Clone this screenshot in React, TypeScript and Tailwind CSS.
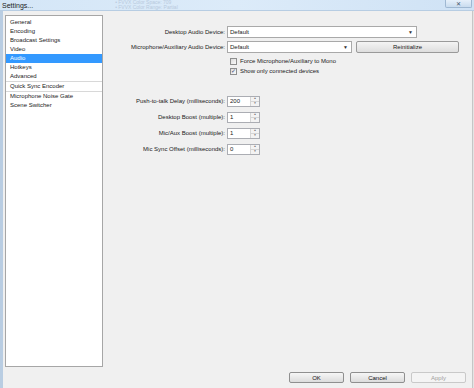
import React from 'react';

const font = { fontFamily: '"Liberation Sans", Arial, sans-serif' };

const items = [
  'General',
  'Encoding',
  'Broadcast Settings',
  'Video',
  'Audio',
  'Hotkeys',
  'Advanced',
  '-',
  'Quick Sync Encoder',
  '-',
  'Microphone Noise Gate',
  'Scene Switcher',
];

function Combo({ width, value }: { width: string; value: string }) {
  return (
    <div
      className={`${width} h-[12px] flex items-center justify-between border border-[#a9a9a9] bg-white pl-[2px] pr-[3px]`}
    >
      <span>{value}</span>
      <span className="text-[5px] text-[#333]">▼</span>
    </div>
  );
}

function Check({ checked, label }: { checked?: boolean; label: string }) {
  return (
    <div className="flex items-center gap-[3px] h-[10px]">
      <div className="w-[7px] h-[7px] border border-[#8e8f8f] bg-gradient-to-br from-[#dcdcdc] to-[#fafafa] flex items-center justify-center text-[6px] leading-none text-[#3a4a7a]">
        {checked ? '✓' : ''}
      </div>
      <span>{label}</span>
    </div>
  );
}

function Spin({ label, value }: { label: string; value: string }) {
  return (
    <div className="flex items-center h-[12px]">
      <div className="w-[124px] text-right pr-[2px]">{label}</div>
      <div className="w-[33px] h-[11px] flex border border-[#abadb3] bg-white">
        <div className="flex-1 pl-[2px] leading-[9px]">{value}</div>
        <div className="w-[9px] flex flex-col border-l border-[#d5d5d5] bg-[#f3f3f3]">
          <div className="flex-1 flex items-center justify-center text-[3px] text-[#777] border-b border-[#d5d5d5]">▲</div>
          <div className="flex-1 flex items-center justify-center text-[3px] text-[#777]">▼</div>
        </div>
      </div>
    </div>
  );
}

function Btn({ label, disabled }: { label: string; disabled?: boolean }) {
  return (
    <div
      className={`w-[55px] h-[11px] flex items-center justify-center rounded-[2px] border ${
        disabled
          ? 'border-[#c9c9c9] bg-[#f4f4f4] text-[#a0a0a0]'
          : 'border-[#8f8f8f] bg-gradient-to-b from-[#f6f6f6] to-[#dcdcdc] text-[#111]'
      }`}
    >
      {label}
    </div>
  );
}

export default function App() {
  return (
    <div
      className="w-[474px] h-[388px] overflow-hidden bg-[#f0f0f0] text-[6px] leading-none text-[#1a1a1a] flex flex-col"
      style={font}
    >
      {/* title bar */}
      <div className="h-[11px] relative bg-gradient-to-r from-[#d4e6f7] via-[#dcebf9] to-[#cfe2f5] border-b border-[#b7cde3] flex items-start">
        <span className="pl-[2px] pt-[2px] text-[7px] text-[#222]">Settings...</span>
        <div className="ml-[82px] flex flex-col text-[5px] text-[#b8c9dd] leading-[5px]">
          <span>•  FVVX Color Space: 709</span>
          <span>•  FVVX Color Range: Partial</span>
        </div>
        <div className="absolute right-[2px] top-0 w-[27px] h-[8px] border border-t-0 border-[#9fb8d2] rounded-b-[2px] bg-gradient-to-b from-[#e6f0fa] to-[#c9dcef] flex items-center justify-center text-[6px] text-[#44556a]">
          ✕
        </div>
      </div>

      <div className="flex-1 flex">
        <div className="w-[3px] bg-[#b9cde2]" />

        {/* category list */}
        <div className="ml-[2px] mt-[4px] w-[98px] h-[352px] border border-[#a6a6a6] bg-white pt-[2px]">
          {items.map((it, i) =>
            it === '-' ? (
              <div key={i} className="h-[1px] bg-[#d8d8d8]" />
            ) : (
              <div
                key={i}
                className={`h-[9px] leading-[9px] pl-[4px] ${
                  it === 'Audio' ? 'bg-[#3399ff] text-white' : ''
                }`}
              >
                {it}
              </div>
            )
          )}
        </div>

        {/* audio page */}
        <div className="flex-1 flex flex-col pt-[15px]">
          <div className="flex items-center">
            <div className="w-[124px] text-right pr-[2px]">Desktop Audio Device:</div>
            <Combo width="w-[190px]" value="Default" />
          </div>
          <div className="flex items-center mt-[3px]">
            <div className="w-[124px] text-right pr-[2px]">Microphone/Auxiliary Audio Device:</div>
            <Combo width="w-[125px]" value="Default" />
            <div className="ml-[4px] w-[103px] h-[12px] flex items-center justify-center rounded-[2px] border border-[#9a9a9a] bg-gradient-to-b from-[#f4f4f4] to-[#dedede]">
              Reinitialize
            </div>
          </div>
          <div className="ml-[127px] mt-[3px] flex flex-col">
            <Check label="Force Microphone/Auxiliary to Mono" />
            <Check checked label="Show only connected devices" />
          </div>

          <div className="mt-[19px] flex flex-col gap-[4px]">
            <Spin label="Push-to-talk Delay (milliseconds):" value="200" />
            <Spin label="Desktop Boost (multiple):" value="1" />
            <Spin label="Mic/Aux Boost (multiple):" value="1" />
            <Spin label="Mic Sync Offset (milliseconds):" value="0" />
          </div>

          <div className="flex-1" />
          <div className="flex justify-end gap-[6px] pr-[6px] pb-[5px]">
            <Btn label="OK" />
            <Btn label="Cancel" />
            <Btn label="Apply" disabled />
          </div>
        </div>
        <div className="w-[2px] border-l border-[#c6c6c6] bg-[#e4e4e4]" />
      </div>
    </div>
  );
}
